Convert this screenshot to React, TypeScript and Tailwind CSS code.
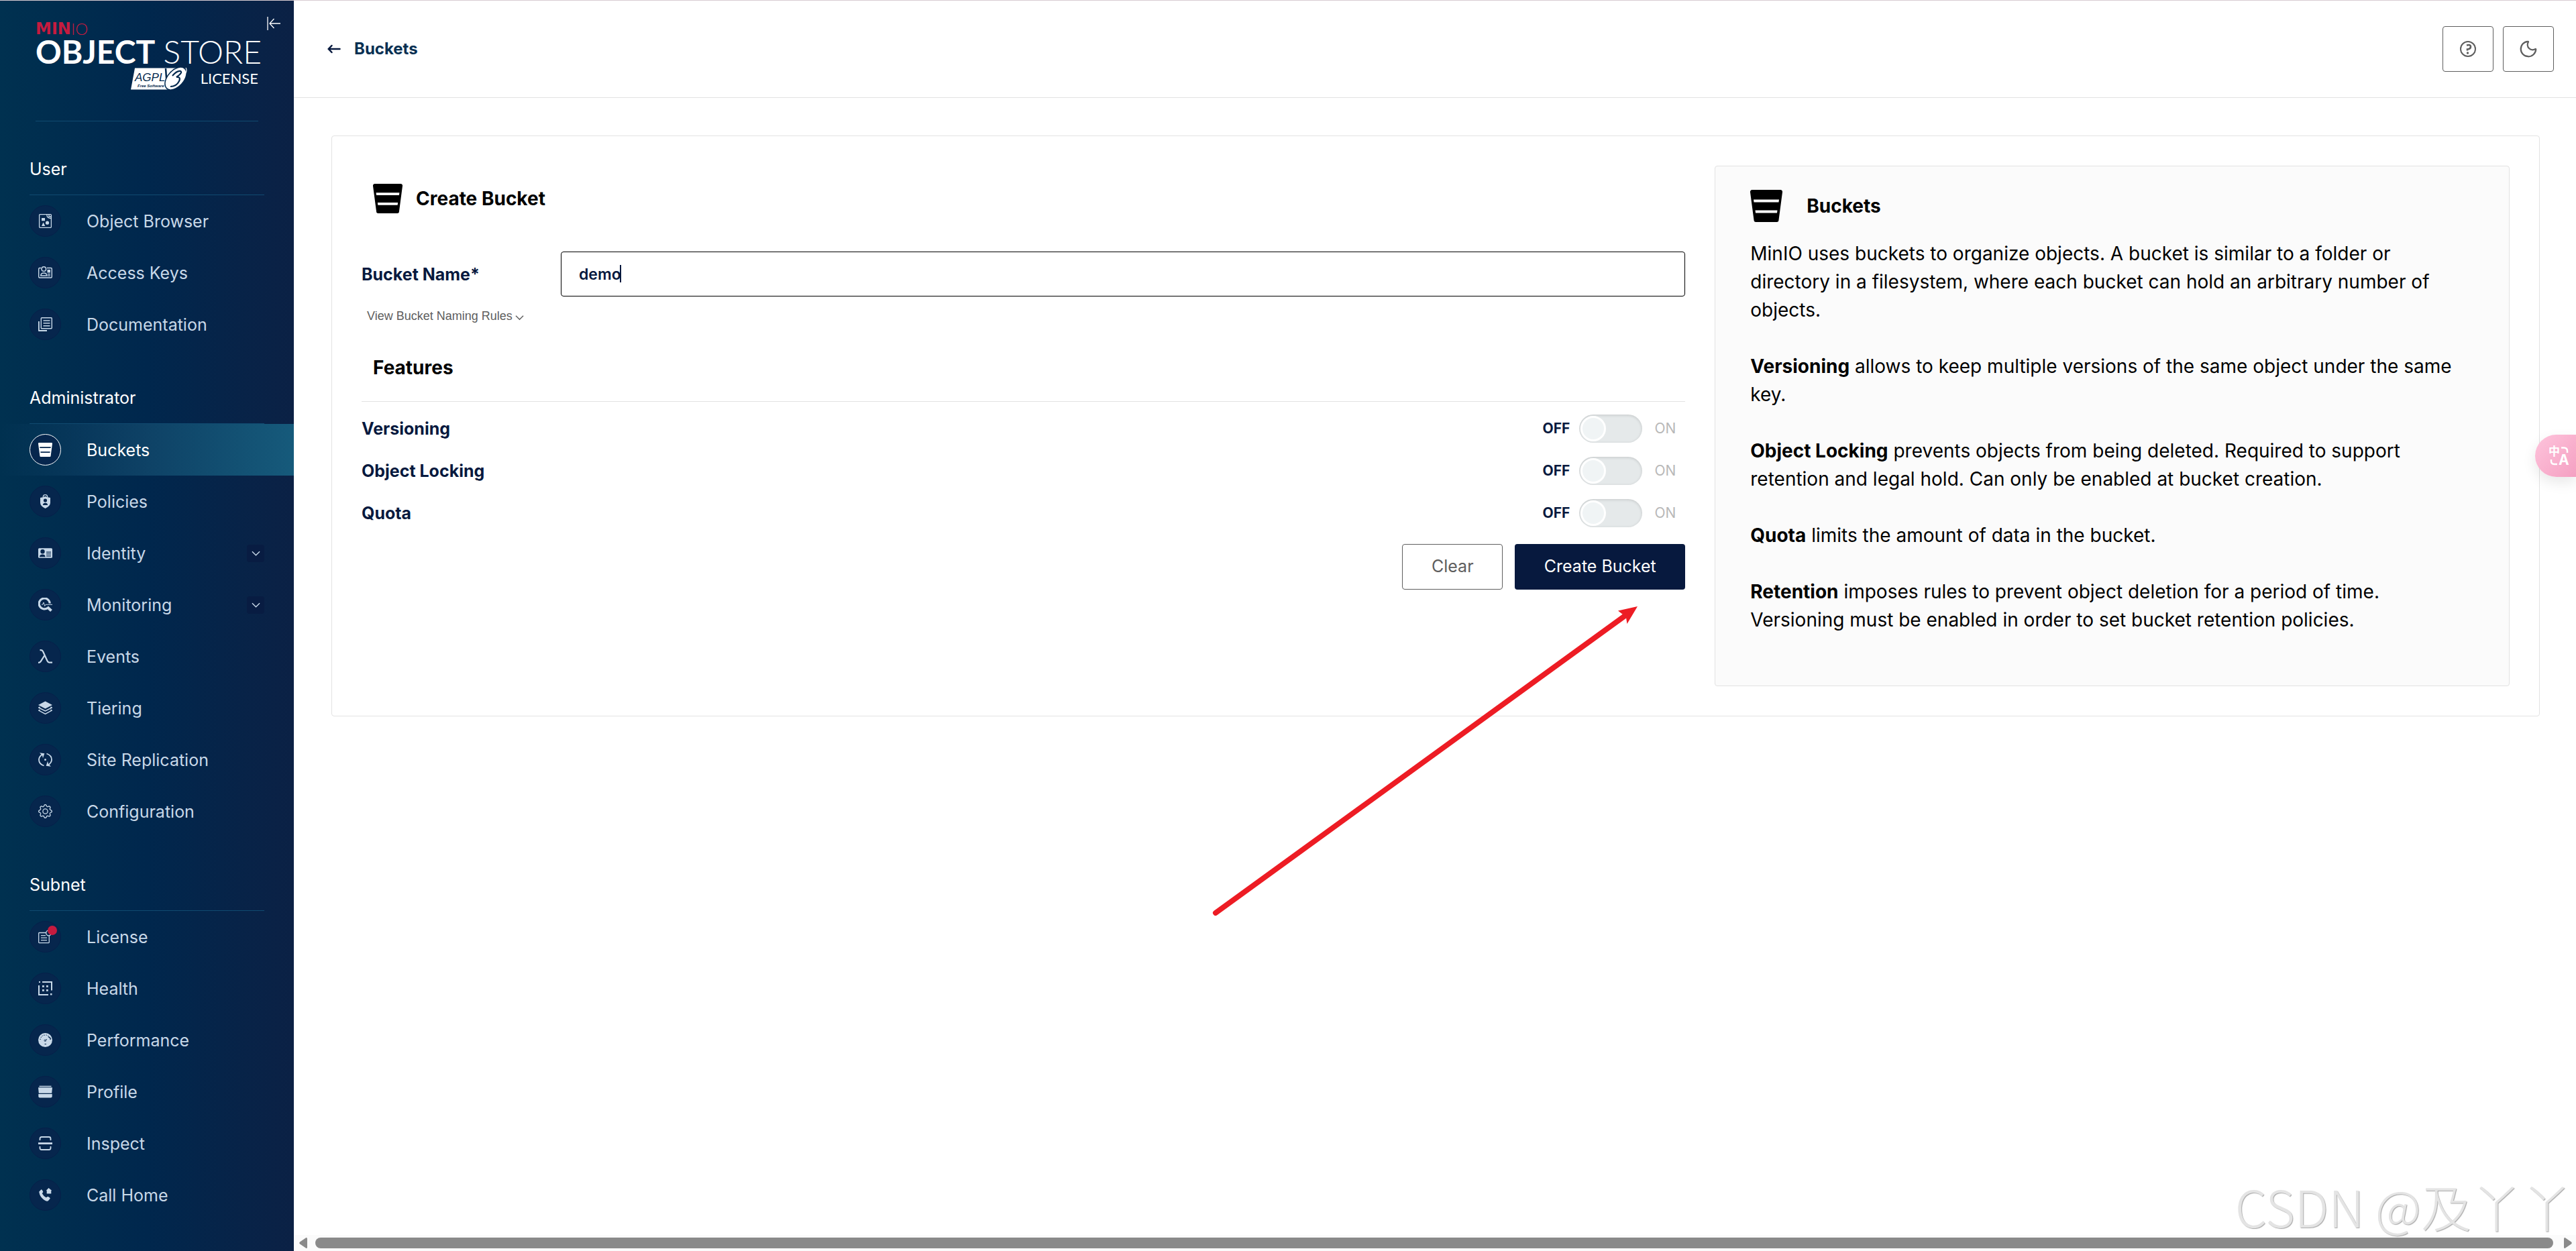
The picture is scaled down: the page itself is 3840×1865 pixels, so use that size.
import { useState, type ReactNode } from "react";
import { Moon } from "lucide-react";
import { BsGear } from "react-icons/bs";

interface IconProps {
  className?: string;
}

interface MenuItem {
  label: string;
  icon: ReactNode;
  active?: boolean;
  expandable?: boolean;
  badge?: boolean;
}

interface MenuGroup {
  title: string;
  items: MenuItem[];
}

function Glyph({ children }: { children: ReactNode }) {
  return (
    <svg viewBox="0 0 21 21" className="size-[21px]" fill="currentColor" aria-hidden="true">
      {children}
    </svg>
  );
}

function BucketIcon({ className }: IconProps) {
  return (
    <svg viewBox="0 0 48 48" className={className} fill="currentColor" aria-hidden="true">
      <path
        fillRule="evenodd"
        d="M3 0h42a3 3 0 0 1 3 3.5L42.500 45a3 3 0 0 1-3 3h-31a3 3 0 0 1-3-3L0 3.500A3 3 0 0 1 3 0zM5 14.500l.5 4h37l.5-4zM7.500 30.500l.5 4h32l.5-4z"
      />
    </svg>
  );
}

function ChevronDown({ className }: IconProps) {
  return (
    <svg viewBox="0 0 14 8" className={className} fill="none" stroke="currentColor" aria-hidden="true">
      <path d="M1 1l6 6 6-6" strokeWidth="1.500" />
    </svg>
  );
}

const ObjectBrowserIcon = (
  <Glyph>
    <path d="M2.600.7h15.800q1 0 1 1v17.600q0 1-1 1H2.600q-1 0-1-1V1.700q0-1 1-1zM12.800.7q0 5.800 6.200 5.800M16 .7V4h3" fill="none" stroke="currentColor" strokeWidth="1.300" />
    <path d="M5 6h5v4.300H5zM7.500 12.500l2.800 5.500H5z" />
    <circle cx="13.500" cy="13.200" r="2.600" />
  </Glyph>
);

const AccessKeysIcon = (
  <Glyph>
    <path d="M4 3.500H2Q.7 3.500.7 5v11.500Q.7 18 2 18h17q1.300 0 1.300-1.500V5q0-1.500-1.300-1.500h-6" fill="none" stroke="currentColor" strokeWidth="1.400" />
    <circle cx="8.300" cy="5" r="3.300" fill="none" stroke="currentColor" strokeWidth="1.500" />
    <path d="M3.800 15q0-4 4.500-4t4.500 4z" fill="none" stroke="currentColor" strokeWidth="1.500" />
    <path d="M13.500 6h4.500v4.500h-4.500zM14 12h4v1.200h-4zM14 14.500h4v1.200h-4z" />
  </Glyph>
);

const DocumentationIcon = (
  <Glyph>
    <rect x="4.300" y=".7" width="16" height="16" rx="1" fill="none" stroke="currentColor" strokeWidth="1.400" />
    <path d="M7.500 4.300h10v1.400h-10zM7.500 8h10v1.400h-10zM7.500 12h10v1.400h-10zM0 6h1.800v13H13v2H1q-1 0-1-1z" />
  </Glyph>
);

const PoliciesIcon = (
  <Glyph>
    <path
      fillRule="evenodd"
      d="M3 5q4-.5 7.500-2Q14 4.500 18 5v7.500q0 5-7.500 8.500Q3 17.500 3 12.500zM10.500 6.500a2.600 2.600 0 1 0 0 5.200 2.600 2.600 0 0 0 0-5.200zM6.800 16h7.400q-.5-3.200-3.700-3.200T6.800 16z"
    />
    <path d="M7.200 4.500q0-3.800 3.300-3.800t3.300 3.800" fill="none" stroke="currentColor" strokeWidth="1.300" />
  </Glyph>
);

const IdentityIcon = (
  <Glyph>
    <path
      fillRule="evenodd"
      d="M1.500 3.300h18q1.500 0 1.500 1.500v11.500q0 1.500-1.500 1.500h-18Q0 17.800 0 16.300V4.800q0-1.500 1.500-1.500zM6.500 5a3.200 3.200 0 1 0 0 6.400 3.200 3.200 0 0 0 0-6.400zM2 16.300h8.500q0-3.700-4.200-3.700T2 16.300zM12 8.500v1.200h7V8.500zM12 11.300v1.200h7v-1.200zM12 14.200v1.200h7v-1.200z"
    />
  </Glyph>
);

const MonitoringIcon = (
  <Glyph>
    <path d="M17.200 8.500a8 8 0 1 0-3 6.700" fill="none" stroke="currentColor" strokeWidth="3.200" />
    <path d="M13.500 14l6 5.500" stroke="currentColor" strokeWidth="4" />
    <path d="M5 10.300h1.500L8 7l1.700 5.500 1.300-2.200h10" fill="none" stroke="currentColor" strokeWidth="1" />
  </Glyph>
);

const EventsIcon = (
  <Glyph>
    <path d="M2.500 1.200h1.700q2 0 3 2.300l6.300 13.800q1 2.300 3 2.300H21M9.800 8.500L3.500 18.300q-1 1.500-3.500 1.500" fill="none" stroke="currentColor" strokeWidth="2.200" />
  </Glyph>
);

const TieringIcon = (
  <Glyph>
    <path d="M10.500.5L21 6 10.500 11.500 0 6z" />
    <path d="M2.500 9L.8 10l9.700 5 9.700-5-1.700-1M2.500 13L.8 14.200l9.700 5.300 9.700-5.300-1.700-1.200" fill="none" stroke="currentColor" strokeWidth="1.500" />
  </Glyph>
);

const SiteReplicationIcon = (
  <Glyph>
    <path d="M8.500 19.500Q1 17 1 10.500q0-4 4.500-7.500M12.500 1.500Q20 4 20 10.500q0 4-4.500 7.500" fill="none" stroke="currentColor" strokeWidth="1.800" />
    <path d="M2 .3l7.300 1L7 8.300l-1-4zM19 20.700l-7.300-1L14 12.700l1 4z" />
    <circle cx="10.500" cy="10.500" r="1.500" />
  </Glyph>
);

const LicenseIcon = (
  <Glyph>
    <path d="M12 4.500H1.500q-.8 0-.8.800v13.500q0 .8.800.8h14q.8 0 .8-.8V9" fill="none" stroke="currentColor" strokeWidth="1.300" />
    <path d="M4 8h7v1.300H4zM4 11.500h9v1.300H4zM4 15h9v1.300H4z" />
    <circle cx="15.500" cy="5" r="3.800" fill="none" stroke="currentColor" strokeWidth="1.300" />
  </Glyph>
);

const HealthIcon = (
  <Glyph>
    <path d="M6 1h14v12.500M15 20H1V6" fill="none" stroke="currentColor" strokeWidth="2" />
    <path d="M1 0h2v2H1zM18 18h2.500v2.500H18zM6 6h2.800v2.800H6zM12 6h2.800v2.800H12zM6 12h2.800v2.800H6zM12 12h2.800v2.800H12z" />
  </Glyph>
);

const PerformanceIcon = (
  <Glyph>
    <circle cx="10.500" cy="10.500" r="10.500" />
    <path d="M3 10q1-7 8-7 4 0 6 4" fill="none" stroke="#06264d" strokeWidth="1.100" strokeDasharray="1.300 1.700" />
    <path d="M15 5.500L18.300 8l-.5 2" fill="none" stroke="#06264d" strokeWidth="1.300" />
    <path d="M10.500 11.500l2.500-2.500M9.500 16.500h2.500" stroke="#06264d" strokeWidth="1" />
    <circle cx="10.300" cy="11.200" r="1.300" fill="none" stroke="#06264d" strokeWidth=".8" />
  </Glyph>
);

const ProfileIcon = (
  <Glyph>
    <path d="M1.500 1.800h18v1.400h-18zM0 4.300h21l-.8 8.500H.8zM.3 14h20.400v3.500q0 2-2 2H2.300q-2 0-2-2z" />
  </Glyph>
);

const InspectIcon = (
  <Glyph>
    <path d="M2.500 6V3.500q0-2.500 2.500-2.500h11q2.500 0 2.500 2.500V6M2.500 15v2.500Q2.500 20 5 20h11q2.500 0 2.500-2.500V15" fill="none" stroke="currentColor" strokeWidth="1.800" />
    <path d="M0 9.200h21v2.800H0z" />
  </Glyph>
);

const CallHomeIcon = (
  <Glyph>
    <path d="M1.300 5.500L4.500 2.300q1.300 0 2.800 3.700L5.800 8.300q2 4 6 6l2.500-1.500q3.500 1.500 3.500 3l-3 3.500q-3 1.500-8-3T1.300 5.500z" />
    <path d="M15.500 0l4.800 4h-1v4.500h-6.600V4h-1z" />
  </Glyph>
);

const MENU: MenuGroup[] = [
  {
    title: "User",
    items: [
      { label: "Object Browser", icon: ObjectBrowserIcon },
      { label: "Access Keys", icon: AccessKeysIcon },
      { label: "Documentation", icon: DocumentationIcon },
    ],
  },
  {
    title: "Administrator",
    items: [
      { label: "Buckets", icon: <BucketIcon className="size-[21px]" />, active: true },
      { label: "Policies", icon: PoliciesIcon },
      { label: "Identity", icon: IdentityIcon, expandable: true },
      { label: "Monitoring", icon: MonitoringIcon, expandable: true },
      { label: "Events", icon: EventsIcon },
      { label: "Tiering", icon: TieringIcon },
      { label: "Site Replication", icon: SiteReplicationIcon },
      { label: "Configuration", icon: <BsGear className="size-[21px]" /> },
    ],
  },
  {
    title: "Subnet",
    items: [
      { label: "License", icon: LicenseIcon, badge: true },
      { label: "Health", icon: HealthIcon },
      { label: "Performance", icon: PerformanceIcon },
      { label: "Profile", icon: ProfileIcon },
      { label: "Inspect", icon: InspectIcon },
      { label: "Call Home", icon: CallHomeIcon },
    ],
  },
];

function Logo() {
  return (
    <div className="flex flex-col font-['Lato',sans-serif] text-white">
      <div className="flex items-center text-2xl leading-[22px] text-[#c51b3f]">
        <span className="font-['DejaVu_Sans',sans-serif] font-bold">MIN</span>
        <span className="font-light">IO</span>
      </div>
      <div className="whitespace-nowrap text-5xl leading-[46px]">
        <span className="font-bold">OBJECT</span> <span className="font-light">STORE</span>
      </div>
      <div className="flex items-center justify-end gap-5">
        <svg viewBox="0 0 84 34" className="h-[34px] w-[84px]" role="img" aria-label="AGPL v3 Free Software">
          <path d="M6 1.500h70L64 33.500H0z" fill="#fff" />
          <path d="M52 2l2 28" stroke="#02284d" strokeWidth="2.500" />
          <ellipse cx="67" cy="17" rx="20" ry="12" transform="rotate(-48 67 17)" fill="#fff" stroke="#02284d" strokeWidth="1.500" />
          <path d="M82 1q3 5-3 12 1 9-20 20" fill="none" stroke="#fff" strokeWidth="1.200" />
          <path d="M62 13q7-8 12-7 4 2-6 9 7-1 4 6-4 8-13 8" fill="none" stroke="#02284d" strokeWidth="2.200" />
          <text x="6" y="21" fontSize="17" fontStyle="italic" fontFamily="Liberation Sans" fill="#02284d">AGPL</text>
          <text x="10" y="30" fontSize="6" fontStyle="italic" fontWeight="bold" fontFamily="Liberation Sans" fill="#02284d">Free Software</text>
        </svg>
        <span className="text-[22px] leading-[34px]">LICENSE</span>
      </div>
    </div>
  );
}

function SidebarItem({ item }: { item: MenuItem }) {
  return (
    <a
      href="#"
      className={
        item.active
          ? "flex h-[77px] items-center bg-linear-to-r from-[#073052]/0 via-[#0e4266] to-[#165a7b] px-11 text-white"
          : "flex h-[77px] items-center px-11 text-[#c8d8e8]"
      }
    >
      <span
        className={
          item.active
            ? "relative flex size-[47px] items-center justify-center rounded-full border border-white bg-[#06264d]"
            : "relative flex size-[47px] items-center justify-center rounded-full border border-[#06204a] bg-[#06264d]"
        }
      >
        {item.icon}
        {item.badge && <span className="absolute top-[6px] right-[5px] size-[14px] rounded-full bg-[#c51b3f]" />}
      </span>
      <span className="ml-[38px] flex-1 text-[25px] leading-8">{item.label}</span>
      {item.expandable && (
        <span className="flex size-[26px] items-center justify-center rounded-sm bg-[#081c42]">
          <ChevronDown className="h-[8px] w-[13px]" />
        </span>
      )}
    </a>
  );
}

function Sidebar() {
  return (
    <aside className="w-[438px] shrink-0 bg-linear-to-r from-[#003150] via-[#00274d] to-[#0b2145]">
      <div className="relative mx-[53px] h-[180px] border-b border-[#104a70] pt-[31px]">
        <Logo />
        <button type="button" aria-label="Collapse menu" className="absolute top-[23px] left-[344px] text-white">
          <svg viewBox="0 0 22 22" className="size-[22px]" fill="none" stroke="currentColor" strokeWidth="1.300">
            <path d="M2 1v20M21 11H5M11.500 4L5 11l6.500 7" />
          </svg>
        </button>
      </div>
      <nav>
        {MENU.map((group) => (
          <section key={group.title}>
            <h2 className="mx-11 border-b border-[#104a70] pt-[55px] pb-[22px] text-[25px] leading-8 text-white">
              {group.title}
            </h2>
            {group.items.map((item) => (
              <SidebarItem key={item.label} item={item} />
            ))}
          </section>
        ))}
      </nav>
    </aside>
  );
}

function Header() {
  return (
    <header className="flex h-[145px] items-center justify-between border-b border-[#e2e2e2] pr-[33px] pl-[50px]">
      <a href="#" className="flex items-center gap-5 text-2xl font-bold text-[#073052]">
        <svg viewBox="0 0 20 14" className="h-[14px] w-[20px]" fill="none" stroke="#07193e" strokeWidth="2.500" strokeLinecap="round">
          <path d="M18.500 7H2M6.500 2L1.800 7l4.700 5" />
        </svg>
        Buckets
      </a>
      <div className="flex gap-[14px]">
        <button type="button" aria-label="Help" className="flex h-[68px] w-[76px] items-center justify-center rounded-[4px] border border-[#5e5e5e] text-[#5e5e5e]">
          <svg viewBox="0 0 24 24" className="size-6" fill="none" stroke="currentColor">
            <circle cx="12" cy="12" r="11" strokeWidth="2" />
            <path d="M10 6.500q6-1.500 6 2t-5 4v2" strokeWidth="2.600" />
            <circle cx="11.500" cy="18" r="1.700" fill="currentColor" stroke="none" />
          </svg>
        </button>
        <button type="button" aria-label="Dark mode" className="flex h-[68px] w-[76px] items-center justify-center rounded-[4px] border border-[#5e5e5e] text-[#5e5e5e]">
          <Moon size={30} strokeWidth={1.8} />
        </button>
      </div>
    </header>
  );
}

function FeatureSwitch({ id, label }: { id: string; label: string }) {
  const [on, setOn] = useState(false);

  return (
    <div className="flex h-[63px] items-center justify-between pr-[14px]">
      <label htmlFor={id} className="text-[25px] leading-8 font-bold">
        {label}
      </label>
      <div className="flex items-center text-[21px] leading-7">
        <span className={on ? "text-[#b8b8b8]" : "font-bold"}>OFF</span>
        <input
          id={id}
          type="checkbox"
          checked={on}
          onChange={(e) => setOn(e.target.checked)}
          className="mr-[18px] ml-[14px] flex h-[42px] w-[94px] appearance-none items-center rounded-full bg-[#e5e9ea] px-[2px] inset-shadow-[0_1px_4px_#00000026] before:size-[38px] before:rounded-full before:border-[3px] before:border-white before:bg-[#f0f4f5] before:content-[''] checked:justify-end checked:bg-[#4ccb92]"
        />
        <span className={on ? "font-bold" : "text-[#b8b8b8]"}>ON</span>
      </div>
    </div>
  );
}

function PointerArrow() {
  return (
    <svg viewBox="0 0 634 462" className="pointer-events-none absolute top-[93px] right-[71px] h-[462px] w-[634px]" aria-hidden="true">
      <path d="M5 457L614 15" stroke="#ed1c24" strokeWidth="8" strokeLinecap="round" />
      <path d="M634 0L605 6.500l7 5.500 5 5 1.500 9z" fill="#ed1c24" />
    </svg>
  );
}

function CreateBucketForm() {
  const [name, setName] = useState("demo");

  return (
    <form className="min-w-0 flex-1 pt-[27px] text-[#07193e]" onSubmit={(e) => e.preventDefault()}>
      <div className="flex items-center gap-5 pl-[17px] text-black">
        <BucketIcon className="size-[44px]" />
        <h1 className="text-[28px] leading-[34px] font-bold">Create Bucket</h1>
      </div>

      <div className="mt-[57px] flex items-center">
        <label htmlFor="bucket-name" className="w-[297px] text-[25px] leading-8 font-bold">
          Bucket Name*
        </label>
        <div className="relative flex-1">
          <input
            id="bucket-name"
            type="text"
            value={name}
            onChange={(e) => setName(e.target.value)}
            className="h-[67px] w-full rounded-[4px] border border-black px-[26px] text-[23px] font-semibold outline-none"
          />
          {name === "demo" && <span className="absolute top-5 left-[88px] h-[26px] w-[2px] bg-[#07193e]" />}
        </div>
      </div>

      <button
        type="button"
        className="mt-[15px] ml-2 flex h-7 items-center gap-1 font-['Liberation_Sans',Arial,sans-serif] text-[18px] text-[#5e5e5e]"
      >
        View Bucket Naming Rules
        <ChevronDown className="mt-1 h-[9px] w-[13px]" />
      </button>

      <h2 className="mt-[46px] border-b border-[#e2e2e2] pb-[33px] pl-[17px] text-[28px] leading-[34px] font-bold text-black">
        Features
      </h2>

      <div className="pt-2">
        <FeatureSwitch id="versioning" label="Versioning" />
        <FeatureSwitch id="locking" label="Object Locking" />
        <FeatureSwitch id="quota" label="Quota" />
      </div>

      <div className="relative mt-[15px] flex justify-end gap-[18px] text-[25px]">
        <button
          type="button"
          onClick={() => setName("")}
          className="h-[68px] w-[150px] rounded-[4px] border border-[#5e5e5e] text-[#5e5e5e]"
        >
          Clear
        </button>
        <button type="submit" className="h-[68px] w-[254px] rounded-[4px] bg-[#07193e] text-white">
          Create Bucket
        </button>
        <PointerArrow />
      </div>
    </form>
  );
}

function HelpBox() {
  return (
    <section className="w-[37%] rounded-[4px] border border-[#e2e2e2] bg-[#fbfbfb] px-[52px] pt-[35px] pb-[77px] text-[28px] leading-[42px] text-black">
      <div className="mb-[26px] flex items-center gap-9">
        <BucketIcon className="size-12" />
        <h2 className="font-bold">Buckets</h2>
      </div>
      <div className="flex flex-col gap-[42px]">
        <p>
          MinIO uses buckets to organize objects. A bucket is similar to a folder or directory in a filesystem, where
          each bucket can hold an arbitrary number of objects.
        </p>
        <p>
          <b>Versioning</b> allows to keep multiple versions of the same object under the same key.
        </p>
        <p>
          <b>Object Locking</b> prevents objects from being deleted. Required to support retention and legal hold. Can
          only be enabled at bucket creation.
        </p>
        <p>
          <b>Quota</b> limits the amount of data in the bucket.
        </p>
        <p>
          <b>Retention</b> imposes rules to prevent object deletion for a period of time. Versioning must be enabled in
          order to set bucket retention policies.
        </p>
      </div>
    </section>
  );
}

function ScrollTrack() {
  return (
    <div className="mt-auto flex h-6 items-center gap-3 bg-[#fbfbfb] pr-[6px] pl-2" aria-hidden="true">
      <svg viewBox="0 0 12 16" className="h-4 w-3" fill="#8a8a8a">
        <path d="M12 1.500v13q0 1.500-1.500 1.500L1 9.500Q-.5 8 1 6.500L10.500 0Q12 0 12 1.500z" />
      </svg>
      <div className="h-4 flex-1 rounded-full bg-[#8a8a8a]" />
      <svg viewBox="0 0 12 16" className="ml-1 h-4 w-3" fill="#8a8a8a">
        <path d="M0 1.500v13Q0 16 1.500 16L11 9.500q1.500-1.500 0-3L1.500 0Q0 0 0 1.500z" />
      </svg>
    </div>
  );
}

function TranslateButton() {
  return (
    <button
      type="button"
      aria-label="Translate"
      className="absolute top-[647px] right-0 flex h-[63px] w-[61px] items-center rounded-l-full bg-linear-to-br from-[#fec4dc] to-[#f4a0c2] pl-[19px] shadow-[0_8px_20px_#00000018]"
    >
      <svg viewBox="0 0 34 34" className="size-[34px] overflow-visible" fill="none" stroke="#fff" strokeWidth="2.500">
        <path d="M20 4.500h4q5 0 5 5V12M5 22v2.500q0 4.500 5 4.500h4" />
        <text x="1" y="16" fontSize="17" fontWeight="bold" fontFamily="Noto Sans CJK SC" fill="#fff" stroke="none">中</text>
        <text x="16" y="30" fontSize="21" fontWeight="bold" fontFamily="Inter" fill="#fff" stroke="none">A</text>
      </svg>
    </button>
  );
}

export default function App() {
  return (
    <div className="relative flex min-h-screen border-t border-[#d8ccd2] bg-white font-['Inter',sans-serif]">
      <Sidebar />
      <main className="flex min-w-0 flex-1 flex-col">
        <Header />
        <div className="mt-14 mr-[54px] ml-14 flex gap-11 rounded-[4px] border border-[#e2e2e2] p-11">
          <CreateBucketForm />
          <HelpBox />
        </div>
        <ScrollTrack />
      </main>
      <TranslateButton />
      <div className="pointer-events-none absolute right-[6px] bottom-[22px] font-['Noto_Sans_CJK_SC',sans-serif] text-[75px] leading-[90px] font-light text-[#e4e4e4] [text-shadow:1px_1px_1px_#a8a8a8]">
        CSDN @及丫丫
      </div>
    </div>
  );
}
